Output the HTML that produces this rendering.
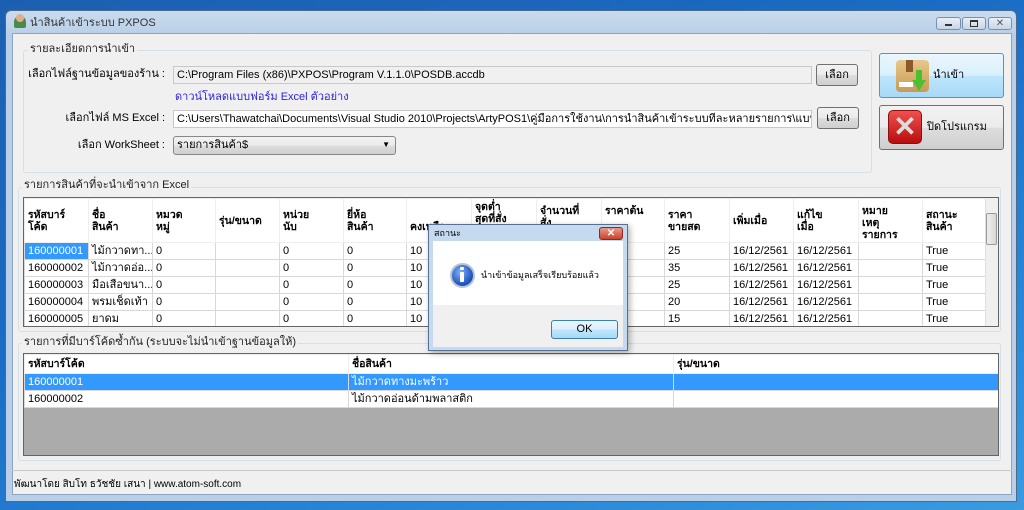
<!DOCTYPE html><html><head><meta charset="utf-8"><style>
*{box-sizing:border-box;margin:0;padding:0}
body{width:1024px;height:510px;overflow:hidden;position:relative;background:linear-gradient(160deg,#1c5fb0 0%,#1a6cc4 40%,#2c8ad8 80%,#3a9be0 100%);font-family:"Liberation Sans","Noto Sans CJK SC",sans-serif;font-size:11px;line-height:13px;color:#000}
.a{position:absolute}
.win{left:5px;top:10px;width:1012px;height:492px;background:linear-gradient(#c9dbee,#b9cfe7 25px);border:1px solid #4a6a90;border-radius:6px 6px 0 0}
.client{left:12px;top:33px;width:1000px;height:462px;background:#f0f0f0;border:1px solid #8ea5c2}
.grp{border:1px solid #d5dfe5;border-radius:3px}
.leg{background:#f0f0f0;padding:0 2px;font-size:11px;color:#222}
.tb{background:#f0f0f0;border:1px solid #c8c8c8;padding:2px 3px;font-size:11px;line-height:12px;white-space:nowrap;overflow:hidden}
.btn{border:1px solid #707070;border-radius:3px;background:linear-gradient(#f2f2f2 0,#ebebeb 50%,#dddddd 51%,#cfcfcf 100%);text-align:center;font-size:11px}
.lbl{text-align:right;font-size:11px}
table{border-collapse:collapse;table-layout:fixed;font-size:11px}
td{border:1px solid #d8d8d8;height:17px;padding:0 3px;white-space:nowrap;overflow:hidden;line-height:14px}
.d td{height:17px;max-height:17px}
.h td{border-color:#eee;font-weight:bold;font-size:10.5px;line-height:12px;padding-top:1px}
</style></head><body>
<div class="a win"></div>
<div class="a" style="left:14px;top:16px;width:12px;height:12px;border-radius:6px 6px 2px 2px;background:#4a8a4a"></div>
<div class="a" style="left:16px;top:14px;width:8px;height:8px;border-radius:4px;background:#e0b08a"></div>
<div class="a" style="left:30px;top:17px;font-size:11px;color:#333">นำสินค้าเข้าระบบ PXPOS</div>
<div class="a" style="left:936px;top:17px;width:25px;height:13px;border:1px solid #7790ad;border-radius:3px;background:linear-gradient(#e8eef6,#c9d6e6)"></div>
<div class="a" style="left:945px;top:24px;width:7px;height:2px;background:#333"></div>
<div class="a" style="left:962px;top:17px;width:24px;height:13px;border:1px solid #7790ad;border-radius:3px;background:linear-gradient(#e8eef6,#c9d6e6)"></div>
<div class="a" style="left:970px;top:20px;width:8px;height:7px;border:1px solid #333;border-top-width:2px"></div>
<div class="a" style="left:988px;top:17px;width:24px;height:13px;border:1px solid #7790ad;border-radius:3px;background:linear-gradient(#e8eef6,#c9d6e6);text-align:center;font-size:10px;line-height:11px;color:#555">✕</div>
<div class="a client"></div>

<div class="a grp" style="left:23px;top:50px;width:849px;height:123px"></div>
<div class="a leg" style="left:28px;top:43px">รายละเอียดการนำเข้า</div>
<div class="a lbl" style="left:20px;top:68px;width:145px">เลือกไฟล์ฐานข้อมูลของร้าน :</div>
<div class="a tb" style="left:173px;top:66px;width:639px;height:18px">C:\Program Files (x86)\PXPOS\Program V.1.1.0\POSDB.accdb</div>
<div class="a btn" style="left:816px;top:64px;width:42px;height:22px;line-height:20px">เลือก</div>
<div class="a" style="left:175px;top:91px;color:#2a1ee0">ดาวน์โหลดแบบฟอร์ม Excel ตัวอย่าง</div>
<div class="a lbl" style="left:20px;top:112px;width:145px">เลือกไฟล์ MS Excel :</div>
<div class="a tb" style="left:173px;top:110px;width:639px;height:18px;background:#fff">C:\Users\Thawatchai\Documents\Visual Studio 2010\Projects\ArtyPOS1\คู่มือการใช้งาน\การนำสินค้าเข้าระบบทีละหลายรายการ\แบบฟอร์มนำเข้าสิ</div>
<div class="a btn" style="left:817px;top:107px;width:42px;height:22px;line-height:20px">เลือก</div>
<div class="a lbl" style="left:20px;top:139px;width:145px">เลือก WorkSheet :</div>
<div class="a btn" style="left:173px;top:136px;width:223px;height:19px;text-align:left;padding-left:3px;line-height:16px;border-color:#888">รายการสินค้า$<span style="position:absolute;right:5px;top:0;font-size:8px">▼</span></div>

<div class="a btn" style="left:879px;top:53px;width:125px;height:45px;border-color:#3c9ed6;background:linear-gradient(#eaf6fd,#d9f0fc 50%,#bee6fd 51%,#a7d9f5)"></div>
<div class="a" style="left:896px;top:60px;width:33px;height:32px;border-radius:4px;background:linear-gradient(#e8c88a,#c99a55)"></div>
<div class="a" style="left:906px;top:60px;width:7px;height:12px;background:#8a5a2a"></div>
<div class="a" style="left:899px;top:82px;width:14px;height:5px;background:#fff"></div>
<div class="a" style="left:916px;top:70px;width:6px;height:10px;background:#4bbf2f"></div>
<div class="a" style="left:912px;top:80px;width:0;height:0;border-left:7px solid transparent;border-right:7px solid transparent;border-top:11px solid #4bbf2f"></div>
<div class="a" style="left:933px;top:69px">นำเข้า</div>
<div class="a btn" style="left:879px;top:105px;width:125px;height:45px"></div>
<div class="a" style="left:888px;top:110px;width:34px;height:34px;border-radius:5px;background:linear-gradient(#f05050,#b80d0d);border:1px solid #8a1010;color:#ddd;font-size:28px;line-height:32px;text-align:center;font-weight:bold">✕</div>
<div class="a" style="left:927px;top:121px">ปิดโปรแกรม</div>

<div class="a grp" style="left:18px;top:187px;width:983px;height:145px"></div>
<div class="a leg" style="left:22px;top:179px">รายการสินค้าที่จะนำเข้าจาก Excel</div>
<div class="a" style="left:23px;top:197px;width:976px;height:130px;border:1px solid #646464;background:#fff;overflow:hidden">
<table style="width:962px">
<colgroup><col style="width:64px"><col style="width:64px"><col style="width:63px"><col style="width:64px"><col style="width:64px"><col style="width:63px"><col style="width:65px"><col style="width:65px"><col style="width:65px"><col style="width:63px"><col style="width:65px"><col style="width:64px"><col style="width:65px"><col style="width:64px"><col style="width:64px"></colgroup>
<tr class="h"><td style="height:44px;padding-top:0">รหัสบาร์<br>โค้ด</td><td>ชื่อ<br>สินค้า</td><td>หมวด<br>หมู่</td><td>รุ่น/ขนาด</td><td>หน่วย<br>นับ</td><td>ยี่ห้อ<br>สินค้า</td><td style="padding-top:12px">คงเหลือ</td><td style="vertical-align:top;padding-top:2px">จุดต่ำ<br>สุดที่สั่ง</td><td style="vertical-align:top;padding-top:6px">จำนวนที่<br>สั่ง</td><td style="vertical-align:top;padding-top:6px">ราคาต้น</td><td>ราคา<br>ขายสด</td><td>เพิ่มเมื่อ</td><td>แก้ไข<br>เมื่อ</td><td style="padding-top:4px">หมาย<br>เหตุ<br>รายการ</td><td>สถานะ<br>สินค้า</td></tr>
<tr class="d"><td style="background:#3399ff;color:#fff">160000001</td><td>ไม้กวาดทา...</td><td>0</td><td></td><td>0</td><td>0</td><td>10</td><td></td><td></td><td></td><td>25</td><td>16/12/2561</td><td>16/12/2561</td><td></td><td>True</td></tr>
<tr class="d"><td>160000002</td><td>ไม้กวาดอ่อ...</td><td>0</td><td></td><td>0</td><td>0</td><td>10</td><td></td><td></td><td></td><td>35</td><td>16/12/2561</td><td>16/12/2561</td><td></td><td>True</td></tr>
<tr class="d"><td>160000003</td><td>มือเสือขนา...</td><td>0</td><td></td><td>0</td><td>0</td><td>10</td><td></td><td></td><td></td><td>25</td><td>16/12/2561</td><td>16/12/2561</td><td></td><td>True</td></tr>
<tr class="d"><td>160000004</td><td>พรมเช็ดเท้า</td><td>0</td><td></td><td>0</td><td>0</td><td>10</td><td></td><td></td><td></td><td>20</td><td>16/12/2561</td><td>16/12/2561</td><td></td><td>True</td></tr>
<tr class="d"><td>160000005</td><td>ยาดม</td><td>0</td><td></td><td>0</td><td>0</td><td>10</td><td></td><td></td><td></td><td>15</td><td>16/12/2561</td><td>16/12/2561</td><td></td><td>True</td></tr>
</table>
<div class="a" style="left:961px;top:0;width:13px;height:128px;background:#f0f0f0;border-left:1px solid #e0e0e0"></div>
<div class="a" style="left:962px;top:15px;width:11px;height:32px;background:linear-gradient(90deg,#eee,#d8d8d8);border:1px solid #999;border-radius:2px"></div>
</div>

<div class="a grp" style="left:18px;top:343px;width:983px;height:118px"></div>
<div class="a leg" style="left:22px;top:336px">รายการที่มีบาร์โค้ดซ้ำกัน (ระบบจะไม่นำเข้าฐานข้อมูลให้)</div>
<div class="a" style="left:23px;top:353px;width:976px;height:103px;border:1px solid #646464;background:#ababab;overflow:hidden">
<table style="width:974px">
<colgroup><col style="width:324px"><col style="width:325px"><col style="width:325px"></colgroup>
<tr class="h" style="background:#fff"><td style="height:19px;padding-top:0">รหัสบาร์โค้ด</td><td style="padding-top:0">ชื่อสินค้า</td><td style="padding-top:0">รุ่น/ขนาด</td></tr>
<tr style="background:#3399ff;color:#fff"><td>160000001</td><td>ไม้กวาดทางมะพร้าว</td><td></td></tr>
<tr style="background:#fff"><td>160000002</td><td>ไม้กวาดอ่อนด้ามพลาสติก</td><td></td></tr>
</table></div>

<div class="a" style="left:12px;top:470px;width:1000px;height:1px;background:#c8c8c8"></div>
<div class="a" style="left:14px;top:478px;font-size:10px">พัฒนาโดย สิบโท ธวัชชัย เสนา | www.atom-soft.com</div>

<div class="a" style="left:428px;top:224px;width:200px;height:127px;border:1px solid #5a7090;background:#c5d9ef;box-shadow:2px 2px 6px rgba(0,0,0,.3)"></div>
<div class="a" style="left:434px;top:227px;font-size:9px">สถานะ</div>
<div class="a" style="left:599px;top:227px;width:24px;height:13px;border:1px solid #8a2a20;border-radius:3px;background:linear-gradient(#e99a88,#c8422c);color:#fff;text-align:center;font-size:10px;line-height:11px;font-weight:bold">✕</div>
<div class="a" style="left:433px;top:241px;width:190px;height:64px;background:#fff"></div>
<div class="a" style="left:433px;top:305px;width:190px;height:42px;background:#f0f0f0"></div>
<div class="a" style="left:450px;top:263px;width:25px;height:25px;border-radius:50%;background:radial-gradient(circle at 40% 35%,#7fb0ff,#1a4fb5 70%);border:2px solid #b8c4d4"></div>
<div class="a" style="left:460px;top:267px;width:4px;height:3px;background:#fff;border-radius:1px"></div>
<div class="a" style="left:460px;top:272px;width:4px;height:10px;background:#fff;border-radius:1px"></div>
<div class="a" style="left:481px;top:269px;font-size:9px">นำเข้าข้อมูลเสร็จเรียบร้อยแล้ว</div>
<div class="a btn" style="left:551px;top:320px;width:67px;height:19px;line-height:17px;border-color:#3c7fb1;background:linear-gradient(#eaf6fd,#d9f0fc 50%,#bee6fd 51%,#a7d9f5)">OK</div>
</body></html>
